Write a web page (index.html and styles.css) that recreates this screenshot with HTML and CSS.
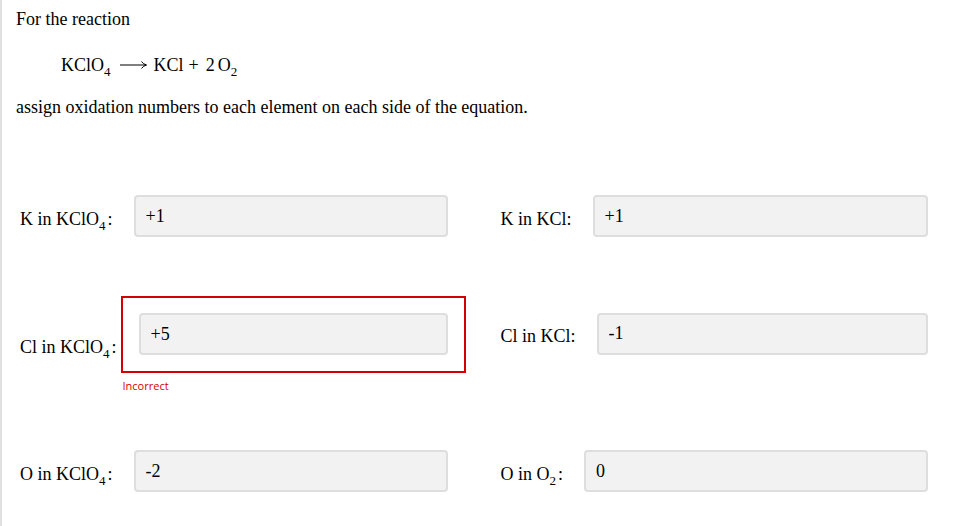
FILE: index.html
```html
<!DOCTYPE html>
<html lang="en">
<head>
    <meta charset="UTF-8">
    <meta name="viewport" content="width=device-width, initial-scale=1.0">
    <title>Oxidation Numbers</title>
    <link rel="stylesheet" href="styles.css">
</head>
<body>
<div class="page">
    <p class="lead">For the reaction</p>

    <div class="equation">
        KClO<sub>4</sub><svg class="arrow" viewBox="0 0 27 10" aria-hidden="true">
            <path d="M0 5 H26" />
            <path d="M21.5 1.5 Q23.2 4.2 26.6 5 Q23.2 5.8 21.5 8.5" />
        </svg>KCl<span class="op">+</span>2<span class="coef"></span>O<sub>2</sub>
    </div>

    <p class="lead">assign oxidation numbers to each element on each side of the equation.</p>

    <div class="answers">
        <div class="row">
            <div class="field">
                <label for="k1">K in KClO<sub>4</sub>:</label>
                <input type="text" id="k1" value="+1">
            </div>
            <div class="field">
                <label for="k2">K in KCl:</label>
                <input type="text" id="k2" value="+1">
            </div>
        </div>

        <div class="row row-mid">
            <div class="field marked">
                <label for="cl1">Cl in KClO<sub>4</sub>:</label>
                <div class="check">
                    <div class="box">
                        <input type="text" id="cl1" value="+5">
                    </div>
                    <div class="note">Incorrect</div>
                </div>
            </div>
            <div class="field beside">
                <label for="cl2">Cl in KCl:</label>
                <input type="text" id="cl2" value="-1">
            </div>
        </div>

        <div class="row row-last">
            <div class="field">
                <label for="o1">O in KClO<sub>4</sub>:</label>
                <input type="text" id="o1" value="-2">
            </div>
            <div class="field">
                <label for="o2">O in O<sub>2</sub>:</label>
                <input type="text" id="o2" value="0">
            </div>
        </div>
    </div>
</div>
</body>
</html>
```

FILE: styles.css
```css
html, body {
    margin: 0;
}

body {
    font-family: "Liberation Serif", "Times New Roman", serif;
    font-size: 18px;
    line-height: 22px;
    color: #000;
    background-color: #fff;
}

.page {
    min-height: 100vh;
    box-sizing: border-box;
    border-left: 2px solid #e0e0e0;
    padding: 8px 29px 0 14px;
}

.lead {
    margin: 0;
}

.equation {
    margin: 24px 0 20px 45px;
    height: 22px;
    white-space: nowrap;
}

sub {
    font-size: 13px;
    line-height: 0;
    vertical-align: -5px;
}

label sub {
    padding-right: 2px;
}

.arrow {
    width: 27px;
    height: 10px;
    margin: 0 7px 0 9px;
    vertical-align: 1px;
    fill: none;
    stroke: #000;
    stroke-width: 1;
}

.op {
    margin: 0 7px 0 5px;
}

.coef {
    display: inline-block;
    width: 3px;
}

.answers {
    margin-top: 77px;
    padding-left: 4px;
}

.row {
    display: grid;
    grid-template-columns: 1fr 1fr;
    column-gap: 53px;
}

.row-mid {
    margin-top: 59px;
}

.row-last {
    margin-top: 57px;
}

.field {
    display: flex;
    align-items: center;
}

.field label {
    margin-right: 21px;
    padding-top: 5px;
    white-space: nowrap;
}

.field input {
    flex: 1;
    min-width: 0;
    height: 42px;
    box-sizing: border-box;
    padding: 0 10px;
    border: 2px solid #dedede;
    border-radius: 4px;
    background-color: #f2f2f2;
    font-family: "Liberation Serif", "Times New Roman", serif;
    font-size: 18px;
    color: #000;
}

.field.marked {
    align-items: flex-start;
}

.field.marked label {
    margin-top: 35px;
}

.field.beside {
    align-self: start;
    height: 75px;
}

.check {
    flex: 1;
    margin: 0 -18px 0 -17px;
}

.box {
    display: flex;
    border: 2px solid #d40000;
    padding: 15px 16px 16px;
}

.note {
    margin: 6px 0 0 2px;
    font-family: "Open Sans", sans-serif;
    font-size: 11px;
    line-height: 14px;
    color: #d40000;
}
```
